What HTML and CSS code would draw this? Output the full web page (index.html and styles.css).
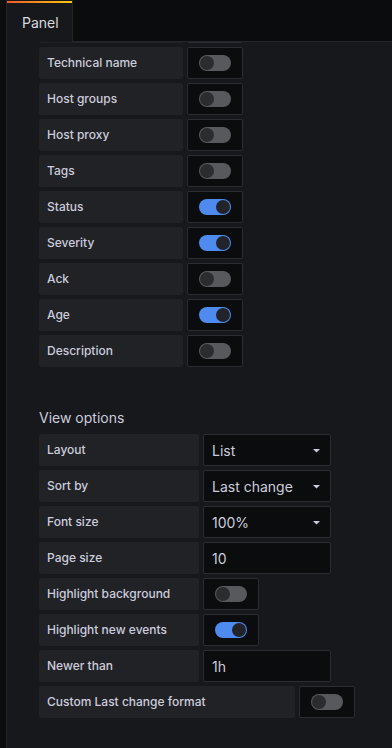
FILE: index.html
```html
<!DOCTYPE html>
<html>
<head>
<meta charset="utf-8">
<link rel="stylesheet" href="styles.css">
</head>
<body>
<div class="tabs">
  <div class="tab">Panel</div>
  <div class="tab-fill"></div>
</div>
<div class="pane">
  <div class="content">
    <div class="group">
      <div class="row"><div class="label"></div><div class="box"><span class="switch on"></span></div></div>
      <div class="row"><div class="label">Technical name</div><div class="box"><span class="switch"></span></div></div>
      <div class="row"><div class="label">Host groups</div><div class="box"><span class="switch"></span></div></div>
      <div class="row"><div class="label">Host proxy</div><div class="box"><span class="switch"></span></div></div>
      <div class="row"><div class="label">Tags</div><div class="box"><span class="switch"></span></div></div>
      <div class="row"><div class="label">Status</div><div class="box"><span class="switch on"></span></div></div>
      <div class="row"><div class="label">Severity</div><div class="box"><span class="switch on"></span></div></div>
      <div class="row"><div class="label">Ack</div><div class="box"><span class="switch"></span></div></div>
      <div class="row"><div class="label">Age</div><div class="box"><span class="switch on"></span></div></div>
      <div class="row"><div class="label">Description</div><div class="box"><span class="switch"></span></div></div>
    </div>
    <h3 class="section">View options</h3>
    <div class="group">
      <div class="row"><div class="label w20">Layout</div><div class="box input"><span>List</span><svg class="caret" width="7" height="4" viewBox="0 0 7 4"><polygon points="0,0 7,0 3.5,3.6" fill="#ccccdc"/></svg></div></div>
      <div class="row"><div class="label w20">Sort by</div><div class="box input"><span>Last change</span><svg class="caret" width="7" height="4" viewBox="0 0 7 4"><polygon points="0,0 7,0 3.5,3.6" fill="#ccccdc"/></svg></div></div>
      <div class="row"><div class="label w20">Font size</div><div class="box input"><span>100%</span><svg class="caret" width="7" height="4" viewBox="0 0 7 4"><polygon points="0,0 7,0 3.5,3.6" fill="#ccccdc"/></svg></div></div>
      <div class="row"><div class="label w20">Page size</div><div class="box input"><span>10</span></div></div>
      <div class="row"><div class="label w20">Highlight background</div><div class="box"><span class="switch"></span></div></div>
      <div class="row"><div class="label w20">Highlight new events</div><div class="box"><span class="switch on"></span></div></div>
      <div class="row"><div class="label w20">Newer than</div><div class="box input"><span>1h</span></div></div>
      <div class="row"><div class="label w32">Custom Last change format</div><div class="box"><span class="switch"></span></div></div>
    </div>
  </div>
</div>
</body>
</html>
```

FILE: styles.css
```css
html, body {
  height: 100%;
}
body {
  margin: 0;
  background: #0b0c0e;
  font-family: Inter, "Noto Sans", sans-serif;
  color: #ccccdc;
  overflow: hidden;
}
.tabs {
  display: flex;
  height: 42px;
}
.tab {
  box-sizing: border-box;
  width: 67px;
  height: 42px;
  margin-left: 6px;
  padding: 11px 0 0 15px;
  line-height: 24px;
  font-size: 14px;
  color: #d8d9de;
  border-left: 1px solid #222428;
  border-right: 1px solid #222428;
  background: linear-gradient(90deg, #f05a28, #fbca0a) 0 1px / 100% 2px no-repeat, #17181c;
}
.tab-fill {
  flex: 1;
  box-sizing: border-box;
  height: 42px;
  border-bottom: 1px solid #24262b;
}
.pane {
  box-sizing: border-box;
  height: calc(100% - 42px);
  margin-left: 6px;
  border-left: 1px solid #222428;
  background: #17181c;
  overflow: hidden;
}
.content {
  margin-top: -31px;
  padding-left: 32px;
}
.group {
  display: flex;
  flex-direction: column;
  gap: 4px;
}
.row {
  display: flex;
  gap: 4px;
  height: 32px;
}
.label {
  box-sizing: border-box;
  width: 144px;
  padding: 0 8px 1px;
  display: flex;
  align-items: center;
  background: #212226;
  border-radius: 2px;
  font-size: 12px;
  font-weight: 500;
  color: #ccccdc;
}
.w20 { width: 160px; }
.w32 { width: 256px; }
.box {
  box-sizing: border-box;
  width: 56px;
  height: 32px;
  border: 1px solid #2c2d32;
  border-radius: 2px;
  background: #0b0c0e;
  display: flex;
  align-items: center;
  justify-content: center;
}
.input {
  width: 128px;
  justify-content: space-between;
  padding: 0 10px 0 8px;
  font-size: 14px;
  color: #ccccdc;
}
.caret {
  display: block;
  margin-top: 1px;
}
.switch {
  position: relative;
  width: 32px;
  height: 16px;
  border-radius: 8px;
  background: #58595c;
}
.switch::after {
  content: "";
  position: absolute;
  top: 1px;
  left: 1px;
  width: 14px;
  height: 14px;
  border-radius: 50%;
  background: #2b2c2f;
}
.switch.on {
  background: #4f8bef;
}
.switch.on::after {
  left: 17px;
  background: #222429;
}
.section {
  margin: 41px 0 6px;
  font-size: 14px;
  font-weight: 400;
  line-height: 20px;
  color: #ccccdc;
}
```
